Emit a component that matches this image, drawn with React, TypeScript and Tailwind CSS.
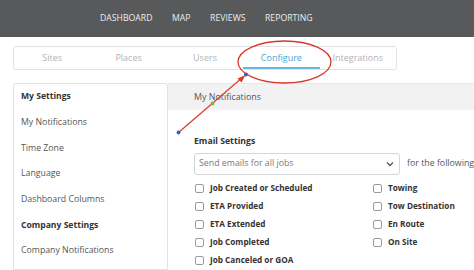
import React from "react";

const navItems = ["DASHBOARD", "MAP", "REVIEWS", "REPORTING"];
const tabs = ["Sites", "Places", "Users", "Configure", "Integrations"];
const sideItems: { label: string; bold?: boolean }[] = [
  { label: "My Settings", bold: true },
  { label: "My Notifications" },
  { label: "Time Zone" },
  { label: "Language" },
  { label: "Dashboard Columns" },
  { label: "Company Settings", bold: true },
  { label: "Company Notifications" },
];
const col1 = [
  "Job Created or Scheduled",
  "ETA Provided",
  "ETA Extended",
  "Job Completed",
  "Job Canceled or GOA",
];
const col2 = ["Towing", "Tow Destination", "En Route", "On Site"];

function Check({ label }: { label: string }) {
  return (
    <div className="flex h-[17.9px] items-center">
      <span className="h-[9px] w-[9px] shrink-0 rounded-[2px] border border-[#9a9a9a] bg-white" />
      <span className="ml-[6px] whitespace-nowrap text-[8.2px] font-bold text-[#333]">{label}</span>
    </div>
  );
}

export default function App() {
  return (
    <div
      className="relative h-[270px] w-[474px] overflow-hidden bg-white"
      style={{ fontFamily: '"Open Sans", "Noto Sans", sans-serif' }}
    >
      <nav className="flex h-[37px] items-center gap-[19.5px] bg-[#58595b] pl-[100px] text-[8.7px] text-[#ececec]">
        {navItems.map((n) => (
          <span key={n}>{n}</span>
        ))}
      </nav>

      <div className="pl-[13px] pt-[9px]">
        <div className="grid h-[24px] w-[384px] grid-cols-5 rounded-[3px] border border-[#e2e2e2] bg-white">
          {tabs.map((t) => (
            <div
              key={t}
              className={
                t === "Configure"
                  ? "flex items-center justify-center border-b-2 border-[#6bb6de] pt-[1px] text-[9px] text-[#4aa3d4]"
                  : "flex items-center justify-center border-b-2 border-transparent pt-[1px] text-[9px] text-[#b3b3b3]"
              }
            >
              {t}
            </div>
          ))}
        </div>
      </div>

      <div className="ml-[13px] mt-[13px] flex">
        <aside className="h-[187px] w-[155px] shrink-0 rounded-t-[3px] border border-[#e2e2e2]">
          {sideItems.map((s) => (
            <div
              key={s.label}
              className={
                s.bold
                  ? "flex h-[25.7px] items-center pl-[7px] text-[8.6px] font-bold text-[#333]"
                  : "flex h-[25.7px] items-center pl-[7px] text-[8.75px] text-[#555]"
              }
            >
              {s.label}
            </div>
          ))}
        </aside>
        <section className="flex-1 border-t border-[#e8e8e8]">
          <div className="flex h-[26px] items-center bg-[#f2f2f2] pl-[26px] text-[8.9px] text-[#555]">
            My Notifications
          </div>
          <div className="pl-[26px] pt-[25px]">
            <div className="text-[8.7px] font-bold text-[#333]">Email Settings</div>
            <div className="mt-[5px] flex items-center">
              <div className="flex h-[22px] w-[206px] items-center justify-between rounded-[3px] border border-[#d6d6d6] pl-[4px] pr-[5px]">
                <span className="text-[8.8px] text-[#7a7a7a]">Send emails for all jobs</span>
                <svg width="8" height="6" viewBox="0 0 8 6">
                  <path d="M1 1.5 L4 4.5 L7 1.5" fill="none" stroke="#555" strokeWidth="1.3" />
                </svg>
              </div>
              <span className="ml-[7px] whitespace-nowrap text-[8.8px] text-[#555]">for the following s</span>
            </div>
            <div className="mt-[4.5px] flex pl-[1px]">
              <div className="w-[178px]">
                {col1.map((c) => (
                  <Check key={c} label={c} />
                ))}
              </div>
              <div>
                {col2.map((c) => (
                  <Check key={c} label={c} />
                ))}
              </div>
            </div>
          </div>
        </section>
      </div>

      <svg className="pointer-events-none absolute left-0 top-0" width="474" height="270" viewBox="0 0 474 270">
        <ellipse cx="284.5" cy="62" rx="46.5" ry="21" fill="none" stroke="#d9382e" strokeWidth="1.3" />
        <line x1="178.5" y1="132.5" x2="243" y2="77" stroke="#e0392c" strokeWidth="1.2" />
        <polygon points="245.5,75 237.5,78.5 241.5,82.5" fill="#e0392c" />
        <circle cx="178.5" cy="132.5" r="1.9" fill="#2f5fb8" />
        <circle cx="246" cy="74.5" r="1.9" fill="#2f5fb8" />
        <circle cx="212.5" cy="103.5" r="1.9" fill="#6cc04a" />
      </svg>
    </div>
  );
}
